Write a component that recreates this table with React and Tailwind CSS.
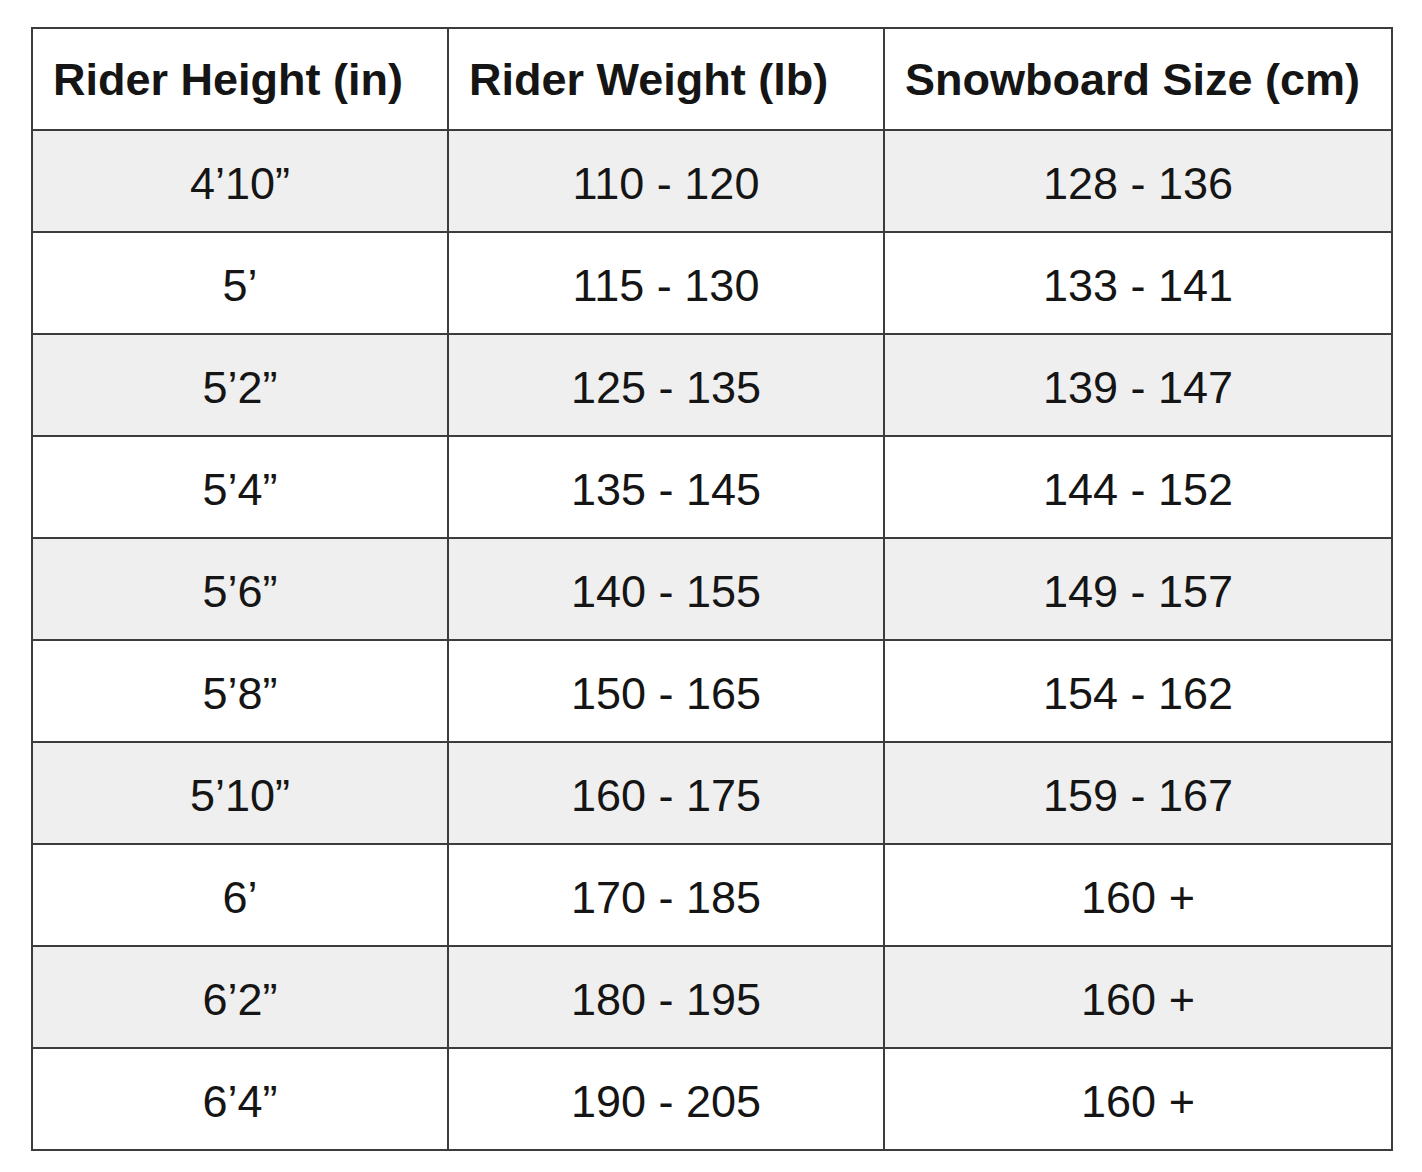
export default function App() {
  const rows = [
    ["4’10”", "110 - 120", "128 - 136"],
    ["5’", "115 - 130", "133 - 141"],
    ["5’2”", "125 - 135", "139 - 147"],
    ["5’4”", "135 - 145", "144 - 152"],
    ["5’6”", "140 - 155", "149 - 157"],
    ["5’8”", "150 - 165", "154 - 162"],
    ["5’10”", "160 - 175", "159 - 167"],
    ["6’", "170 - 185", "160 +"],
    ["6’2”", "180 - 195", "160 +"],
    ["6’4”", "190 - 205", "160 +"],
  ];
  const headers = ["Rider Height (in)", "Rider Weight (lb)", "Snowboard Size (cm)"];
  return (
    <div className="w-[1422px] h-[1172px] bg-white pt-[27px] pl-[31px]" style={{ fontFamily: '"Liberation Sans", Arial, sans-serif' }}>
      <table className="table-fixed border-collapse w-[1360px] text-[#151515]">
        <colgroup>
          <col className="w-[416px]" />
          <col className="w-[436px]" />
          <col className="w-[508px]" />
        </colgroup>
        <thead>
          <tr className="h-[102px]">
            {headers.map((h) => (
              <th key={h} className="border-2 border-[#3c3c3c] text-left pl-[20px] pr-0 text-[45px] font-bold leading-none whitespace-nowrap align-middle">
                {h}
              </th>
            ))}
          </tr>
        </thead>
        <tbody>
          {rows.map((r, i) => (
            <tr key={i} className={i % 2 === 0 ? "h-[102px] bg-[#efefef]" : "h-[102px] bg-white"}>
              {r.map((c, j) => (
                <td key={j} className="border-2 border-[#3c3c3c] text-center text-[45px] leading-none align-middle pt-[4px]">
                  {c}
                </td>
              ))}
            </tr>
          ))}
        </tbody>
      </table>
    </div>
  );
}
